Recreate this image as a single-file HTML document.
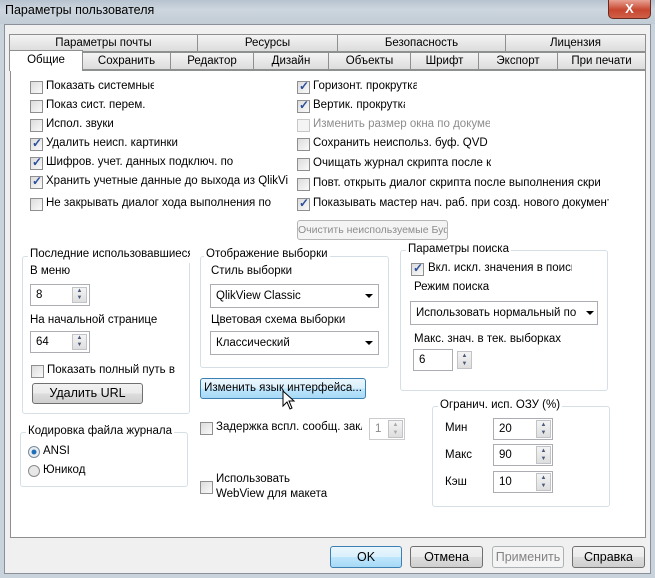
<!DOCTYPE html>
<html><head><meta charset="utf-8"><style>
*{box-sizing:border-box;margin:0;padding:0}
body{width:655px;height:578px;overflow:hidden;position:relative;background:#c9d3dc;font:11.5px/17px "Liberation Sans",sans-serif;color:#000}
.a{position:absolute;white-space:nowrap}
.win{left:4px;top:24px;width:647px;height:550px;background:#f0f0f0;border:1px solid #8a9099}
.title{left:0;top:0;width:655px;height:24px;background:linear-gradient(#b7c3cf,#cdd6de 40%,#c1ccd6);}
.close{left:608px;top:0;width:43px;height:19px;background:linear-gradient(#e8a293,#c7462f 55%,#d0614a);border:1px solid #6b2a20;border-top:none;border-radius:0 0 5px 5px;color:#fff;font-weight:bold;text-align:center;line-height:17px;font-size:13px}
.tab{height:18px;background:linear-gradient(#f4f4f4,#dcdcdc);border:1px solid #8e8f8f;text-align:center;line-height:16px}
.panel{left:10px;top:70px;width:636px;height:468px;background:#fff;border:1px solid #8e8f8f}
.cb{width:13px;height:13px;border:1px solid #8f8f8f;background:linear-gradient(135deg,#dcdcdc,#fafafa)}
.cb.c::after{content:"✓";position:absolute;left:1px;top:-3px;font-size:12px;line-height:14px;color:#2a4e9a;font-weight:bold}
.cb.d{border-color:#c8c8c8;background:#f4f4f4}
.grp{border:1px solid #d5dfe5;border-radius:3px}
.gl{background:#fff;padding:0 2px}
.in{border:1px solid #abadb3;background:#fff;padding-left:5px;line-height:20px;overflow:hidden}
.sp{width:15px;border:1px solid #c0c4c8;background:linear-gradient(#f4f4f4,#dedede);font-size:6px;color:#4a5a7a;text-align:center}
.btn{border:1px solid #707070;border-radius:3px;background:linear-gradient(#f2f2f2,#ebebeb 50%,#dddddd 51%,#cfcfcf);text-align:center;overflow:hidden}
.arr{width:0;height:0;border-left:4px solid transparent;border-right:4px solid transparent;border-top:4px solid #000}
.clip{overflow:hidden}
</style></head><body>
<div class="a title"></div>
<div class="a" style="left:5px;top:2px;font-size:12.5px">Параметры пользователя</div>
<div class="a close">X</div>
<div class="a win"></div>

<div class="a tab" style="left:9px;top:34px;width:189px">Параметры почты</div>
<div class="a tab" style="left:197px;top:34px;width:141px">Ресурсы</div>
<div class="a tab" style="left:337px;top:34px;width:169px">Безопасность</div>
<div class="a tab" style="left:505px;top:34px;width:141px">Лицензия</div>
<div class="a tab" style="left:82px;top:52px;width:89px">Сохранить</div>
<div class="a tab" style="left:170px;top:52px;width:84px">Редактор</div>
<div class="a tab" style="left:253px;top:52px;width:76px">Дизайн</div>
<div class="a tab" style="left:328px;top:52px;width:83px">Объекты</div>
<div class="a tab" style="left:410px;top:52px;width:69px">Шрифт</div>
<div class="a tab" style="left:478px;top:52px;width:80px">Экспорт</div>
<div class="a tab" style="left:557px;top:52px;width:89px">При печати</div>
<div class="a panel"></div>
<div class="a" style="left:9px;top:50px;width:74px;height:21px;background:#fff;border:1px solid #8e8f8f;border-bottom:none;text-align:center;line-height:18px">Общие</div>

<!-- left checks -->
<div class="a cb" style="left:30px;top:81px"></div><div class="a clip" style="left:46px;top:78px;width:108px">Показать системные</div>
<div class="a cb" style="left:30px;top:100px"></div><div class="a" style="left:46px;top:97px">Показ сист. перем.</div>
<div class="a cb" style="left:30px;top:119px"></div><div class="a" style="left:46px;top:116px">Испол. звуки</div>
<div class="a cb c" style="left:30px;top:138px"></div><div class="a" style="left:46px;top:135px">Удалить неисп. картинки</div>
<div class="a cb c" style="left:30px;top:157px"></div><div class="a" style="left:46px;top:154px">Шифров. учет. данных подключ. по</div>
<div class="a cb c" style="left:30px;top:176px"></div><div class="a clip" style="left:46px;top:173px;width:242px">Хранить учетные данные до выхода из QlikView</div>
<div class="a cb" style="left:30px;top:198px"></div><div class="a" style="left:46px;top:195px">Не закрывать диалог хода выполнения по</div>
<!-- right checks -->
<div class="a cb c" style="left:297px;top:81px"></div><div class="a clip" style="left:313px;top:78px;width:104px">Горизонт. прокрутка</div>
<div class="a cb c" style="left:297px;top:100px"></div><div class="a clip" style="left:313px;top:97px;width:92px">Вертик. прокрутка</div>
<div class="a cb d" style="left:297px;top:119px"></div><div class="a clip" style="left:313px;top:116px;color:#8d8d8d;width:177px">Изменить размер окна по документу</div>
<div class="a cb" style="left:297px;top:138px"></div><div class="a" style="left:313px;top:135px">Сохранить неиспольз. буф. QVD</div>
<div class="a cb" style="left:297px;top:158px"></div><div class="a clip" style="left:313px;top:155px;width:178px">Очищать журнал скрипта после каждого</div>
<div class="a cb" style="left:297px;top:178px"></div><div class="a clip" style="left:313px;top:175px;width:287px">Повт. открыть диалог скрипта после выполнения скрипта</div>
<div class="a cb c" style="left:297px;top:198px"></div><div class="a clip" style="left:313px;top:195px;width:296px">Показывать мастер нач. раб. при созд. нового документа</div>
<div class="a btn" style="left:297px;top:220px;width:151px;height:20px;color:#8d8d8d;border-color:#b5b5b5;background:#f4f4f4;line-height:18px;font-size:10.5px">Очистить неиспользуемые Буферы QVD</div>

<!-- group recent -->
<div class="a grp" style="left:22px;top:256px;width:168px;height:158px"></div>
<div class="a gl clip" style="left:28px;top:246px;width:162px">Последние использовавшиеся фа</div>
<div class="a" style="left:30px;top:263px">В меню</div>
<div class="a in" style="left:30px;top:284px;width:60px;height:22px">8</div>
<div class="a sp" style="left:72px;top:287px;height:16px;line-height:7px">▲<br>▼</div>
<div class="a" style="left:30px;top:312px">На начальной странице</div>
<div class="a in" style="left:30px;top:331px;width:60px;height:22px">64</div>
<div class="a sp" style="left:72px;top:334px;height:16px;line-height:7px">▲<br>▼</div>
<div class="a cb" style="left:31px;top:365px"></div><div class="a" style="left:47px;top:362px">Показать полный путь в</div>
<div class="a btn" style="left:32px;top:383px;width:111px;height:21px;line-height:19px;font-size:12.5px">Удалить URL</div>

<!-- group selection -->
<div class="a grp" style="left:200px;top:256px;width:189px;height:112px"></div>
<div class="a gl" style="left:204px;top:246px">Отображение выборки</div>
<div class="a" style="left:211px;top:263px">Стиль выборки</div>
<div class="a in" style="left:210px;top:284px;width:169px;height:24px;line-height:22px">QlikView Classic</div>
<div class="a arr" style="left:365px;top:294px"></div>
<div class="a" style="left:211px;top:312px">Цветовая схема выборки</div>
<div class="a in" style="left:210px;top:331px;width:169px;height:24px;line-height:22px">Классический</div>
<div class="a arr" style="left:365px;top:341px"></div>
<div class="a btn" style="left:200px;top:378px;width:166px;height:21px;line-height:19px;border-color:#3c7fb1;background:linear-gradient(#eaf6fd,#d9f0fc 50%,#bee6fd 51%,#a7d9f5)">Изменить язык интерфейса...</div>
<svg class="a" style="left:282px;top:390px" width="14" height="20" viewBox="0 0 14 20"><path d="M1 1 L1 16 L5 12 L8 19 L10 18 L7 11 L12 11 Z" fill="#fff" stroke="#000" stroke-width="1"/></svg>

<!-- group search -->
<div class="a grp" style="left:400px;top:250px;width:208px;height:141px"></div>
<div class="a gl" style="left:406px;top:241px">Параметры поиска</div>
<div class="a cb c" style="left:411px;top:263px"></div><div class="a clip" style="left:428px;top:260px;width:144px">Вкл. искл. значения в поиске</div>
<div class="a" style="left:414px;top:279px">Режим поиска</div>
<div class="a in" style="left:410px;top:301px;width:188px;height:24px;line-height:22px"><span style="display:inline-block;width:160px;overflow:hidden">Использовать нормальный поиск</span></div>
<div class="a arr" style="left:586px;top:311px"></div>
<div class="a" style="left:414px;top:331px">Макс. знач. в тек. выборках</div>
<div class="a in" style="left:413px;top:349px;width:40px;height:22px">6</div>
<div class="a sp" style="left:457px;top:351px;height:18px;line-height:8px">▲<br>▼</div>

<!-- RAM -->
<div class="a grp" style="left:432px;top:406px;width:178px;height:101px"></div>
<div class="a gl" style="left:438px;top:397px">Огранич. исп. ОЗУ (%)</div>
<div class="a" style="left:445px;top:420px">Мин</div>
<div class="a in" style="left:493px;top:418px;width:60px;height:22px">20</div>
<div class="a sp" style="left:536px;top:420px;height:18px;line-height:8px">▲<br>▼</div>
<div class="a" style="left:445px;top:447px">Макс</div>
<div class="a in" style="left:493px;top:444px;width:60px;height:22px">90</div>
<div class="a sp" style="left:536px;top:446px;height:18px;line-height:8px">▲<br>▼</div>
<div class="a" style="left:445px;top:474px">Кэш</div>
<div class="a in" style="left:493px;top:471px;width:60px;height:22px">10</div>
<div class="a sp" style="left:536px;top:473px;height:18px;line-height:8px">▲<br>▼</div>

<div class="a cb" style="left:200px;top:422px"></div><div class="a clip" style="left:216px;top:419px;width:146px">Задержка вспл. сообщ. закл</div>
<div class="a in" style="left:369px;top:418px;width:36px;height:22px;border-color:#ccc;color:#888">1</div>
<div class="a sp" style="left:388px;top:420px;height:18px;line-height:8px;color:#aaa">▲<br>▼</div>
<div class="a cb" style="left:200px;top:481px"></div><div class="a" style="left:216px;top:472px;line-height:15px">Использовать<br>WebView для макета</div>

<!-- encoding -->
<div class="a grp" style="left:20px;top:432px;width:168px;height:55px"></div>
<div class="a gl" style="left:26px;top:423px">Кодировка файла журнала</div>
<div class="a" style="left:28px;top:446px;width:12px;height:12px;border-radius:50%;border:1px solid #7a8a99;background:radial-gradient(#1d6fb8 30%,#e8eef4 40%)"></div><div class="a" style="left:43px;top:443px">ANSI</div>
<div class="a" style="left:28px;top:465px;width:12px;height:12px;border-radius:50%;border:1px solid #8a8a8a;background:#e8e8e8"></div><div class="a" style="left:43px;top:462px">Юникод</div>

<!-- bottom buttons -->
<div class="a btn" style="left:330px;top:546px;width:72px;height:22px;line-height:20px;font-size:12.5px;border-color:#3c7fb1;background:linear-gradient(#eaf6fd,#d9f0fc 50%,#bee6fd 51%,#a7d9f5)">OK</div>
<div class="a btn" style="left:410px;top:546px;width:73px;height:22px;line-height:20px;font-size:12.5px">Отмена</div>
<div class="a btn" style="left:492px;top:546px;width:72px;height:22px;line-height:20px;font-size:12.5px;border-color:#adb2b5;background:#f4f4f4;color:#838383">Применить</div>
<div class="a btn" style="left:572px;top:546px;width:73px;height:22px;line-height:20px;font-size:12.5px">Справка</div>
</body></html>
